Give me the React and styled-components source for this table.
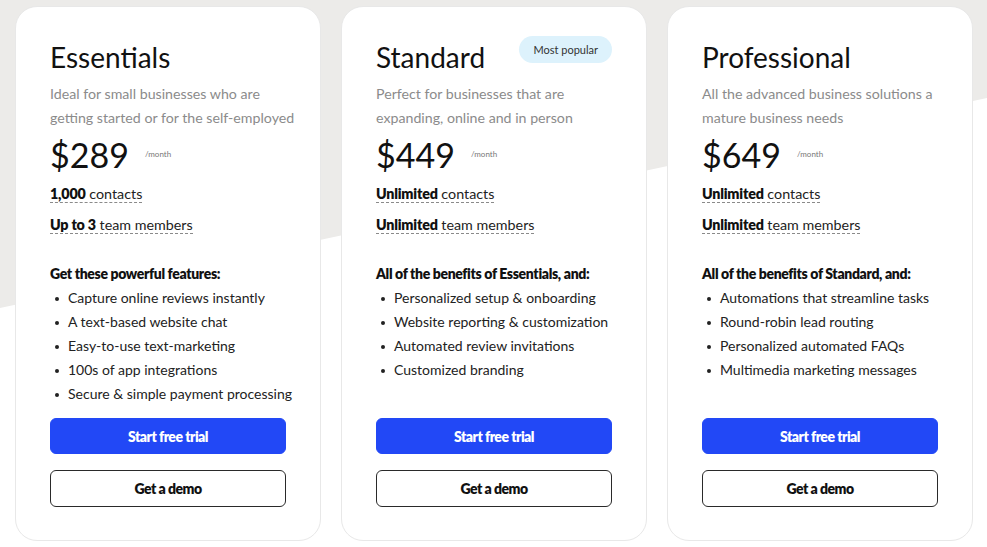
import React from "react";
import styled, { createGlobalStyle } from "styled-components";

const GlobalStyle = createGlobalStyle`
  html, body {
    margin: 0;
    padding: 0;
    background: #ffffff;
  }
  body {
    font-family: "Lato", "Liberation Sans", sans-serif;
    color: #111;
    -webkit-font-smoothing: antialiased;
  }
  * {
    box-sizing: border-box;
  }
`;

const plans = [
  {
    name: "Essentials",
    description: "Ideal for small businesses who are getting started or for the self-employed",
    price: "$289",
    limits: [
      { strong: "1,000", rest: "contacts" },
      { strong: "Up to 3", rest: "team members" },
    ],
    heading: "Get these powerful features:",
    features: [
      "Capture online reviews instantly",
      "A text-based website chat",
      "Easy-to-use text-marketing",
      "100s of app integrations",
      "Secure & simple payment processing",
    ],
  },
  {
    name: "Standard",
    popular: true,
    description: "Perfect for businesses that are expanding, online and in person",
    price: "$449",
    limits: [
      { strong: "Unlimited", rest: "contacts" },
      { strong: "Unlimited", rest: "team members" },
    ],
    heading: "All of the benefits of Essentials, and:",
    features: [
      "Personalized setup & onboarding",
      "Website reporting & customization",
      "Automated review invitations",
      "Customized branding",
    ],
  },
  {
    name: "Professional",
    description: "All the advanced business solutions a mature business needs",
    price: "$649",
    limits: [
      { strong: "Unlimited", rest: "contacts" },
      { strong: "Unlimited", rest: "team members" },
    ],
    heading: "All of the benefits of Standard, and:",
    features: [
      "Automations that streamline tasks",
      "Round-robin lead routing",
      "Personalized automated FAQs",
      "Multimedia marketing messages",
    ],
  },
];

export default function App() {
  return (
    <>
      <GlobalStyle />
      <Page>
        <Grid>
          {plans.map((plan) => (
            <Card key={plan.name}>
              <TitleRow>
                <Title>{plan.name}</Title>
                {plan.popular && <Badge>Most popular</Badge>}
              </TitleRow>
              <Description>{plan.description}</Description>
              <PriceRow>
                <Price>{plan.price}</Price>
                <Per>/month</Per>
              </PriceRow>
              <Limits>
                {plan.limits.map((l) => (
                  <Limit key={l.rest}>
                    <b>{l.strong}</b> {l.rest}
                  </Limit>
                ))}
              </Limits>
              <FeatureHeading>{plan.heading}</FeatureHeading>
              <Features>
                {plan.features.map((f) => (
                  <li key={f}>{f}</li>
                ))}
              </Features>
              <Actions>
                <Button $primary>Start free trial</Button>
                <Button>Get a demo</Button>
              </Actions>
            </Card>
          ))}
        </Grid>
      </Page>
    </>
  );
}

const Page = styled.div`
  position: relative;
  min-height: 100vh;
  padding: 6px 14px 5px 15px;
  &::before {
    content: "";
    position: absolute;
    inset: 0;
    background: #ecebe9;
    clip-path: polygon(0 0, 100% 0, 100% 98px, 0 308px);
  }
`;

const Grid = styled.div`
  position: relative;
  display: grid;
  grid-template-columns: repeat(3, 1fr);
  gap: 20px;
`;

/* content column is 236px wide for buttons/badge; text may run 20px further */
const Card = styled.div`
  display: flex;
  flex-direction: column;
  background: #fff;
  border: 1px solid #e8e8e8;
  border-radius: 22px;
  padding: 33px 14px 33px 34px;
`;

const TitleRow = styled.div`
  display: flex;
  justify-content: space-between;
  align-items: flex-start;
  padding-right: 20px;
`;

const Title = styled.h2`
  margin: 0;
  font-size: 28px;
  line-height: 34px;
  font-weight: 400;
  color: #111;
`;

const Badge = styled.span`
  margin-top: -4px;
  height: 27px;
  padding: 0 14px;
  display: inline-flex;
  align-items: center;
  border-radius: 14px;
  background: #ddf2fc;
  color: #333;
  font-size: 11px;
`;

const Description = styled.p`
  margin: 8px 0 0;
  font-size: 14.2px;
  line-height: 24px;
  color: #8b8b8b;
`;

const PriceRow = styled.div`
  display: flex;
  align-items: flex-start;
  gap: 16px;
  margin-top: 5px;
`;

const Price = styled.span`
  font-size: 34px;
  line-height: 40px;
  font-weight: 400;
  color: #111;
`;

const Per = styled.span`
  font-size: 8px;
  color: #777;
  margin-top: 14px;
`;

const Limits = styled.div`
  display: flex;
  flex-direction: column;
  align-items: flex-start;
  gap: 13px;
  margin-top: 10px;
`;

const Limit = styled.span`
  font-size: 14.3px;
  line-height: 17px;
  color: #222;
  border-bottom: 1px dashed #8a8a8a;
  b {
    font-weight: 800;
    color: #111;
    letter-spacing: -0.2px;
  }
`;

const FeatureHeading = styled.h4`
  margin: 31px 0 0;
  font-size: 14px;
  line-height: 17px;
  font-weight: 800;
  letter-spacing: -0.35px;
  color: #111;
`;

const Features = styled.ul`
  list-style: none;
  margin: 4px 0 0;
  padding: 0;
  li {
    position: relative;
    padding-left: 18px;
    font-size: 14px;
    line-height: 24px;
    color: #222;
    &::before {
      content: "";
      position: absolute;
      left: 5px;
      top: 11px;
      width: 4px;
      height: 4px;
      border-radius: 50%;
      background: #222;
    }
  }
`;

const Actions = styled.div`
  display: flex;
  flex-direction: column;
  gap: 16px;
  margin-top: auto;
  padding-top: 12px;
  padding-right: 20px;
`;

const Button = styled.button`
  height: ${(p) => (p.$primary ? "36px" : "37px")};
  width: 100%;
  border-radius: 6px;
  border: 1px solid ${(p) => (p.$primary ? "#2248f6" : "#2a2a2a")};
  background: ${(p) => (p.$primary ? "#2248f6" : "#fff")};
  color: ${(p) => (p.$primary ? "#fff" : "#111")};
  font-family: "Lato", "Liberation Sans", sans-serif;
  font-size: 14px;
  font-weight: 800;
  letter-spacing: -0.5px;
  cursor: pointer;
`;
